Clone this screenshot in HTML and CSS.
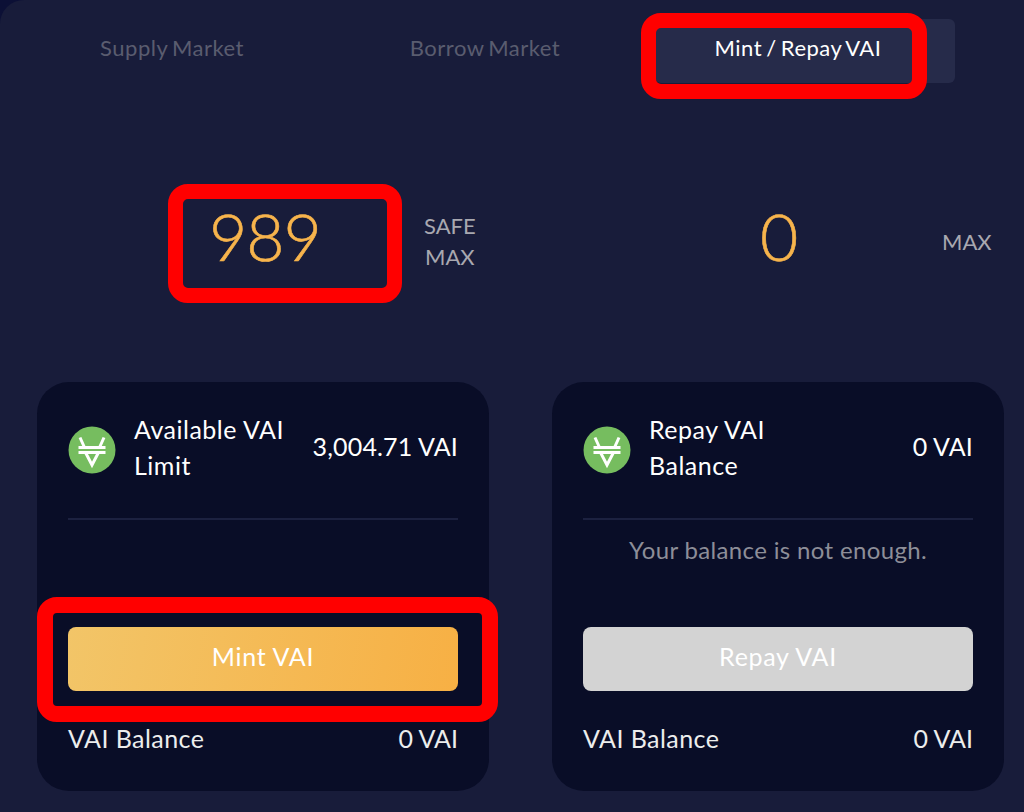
FILE: index.html
```html
<!DOCTYPE html>
<html lang="en">
<head>
<meta charset="utf-8">
<title>Mint / Repay VAI</title>
<link rel="stylesheet" href="styles.css">
</head>
<body>
<main class="panel">
  <nav class="tabs">
    <div class="tab">Supply Market</div>
    <div class="tab">Borrow Market</div>
    <div class="tab tab-active">Mint / Repay VAI</div>
  </nav>
  <section class="inputs">
    <div class="input-col">
      <span class="amount amount-left">989</span>
      <span class="safe">SAFE<br>MAX</span>
    </div>
    <div class="input-col">
      <span class="amount amount-right">0</span>
      <span class="max">MAX</span>
    </div>
  </section>
  <section class="cards">
    <article class="card">
      <div class="card-head">
        <svg class="coin" viewBox="0 0 48 48" aria-hidden="true">
          <circle cx="24" cy="24" r="23.5" fill="#76bd5f"/>
          <g fill="none" stroke="#fff" stroke-width="3">
            <path d="M12 11.500 16.500 21.500M36 11.500 31.500 21.500M10.500 21.500H37.500M10.500 26.500H37.500M17.500 26.500 24 39 30.500 26.500"/>
          </g>
        </svg>
        <div class="head-label">Available VAI Limit</div>
        <div class="head-value">3,004.71 VAI</div>
      </div>
      <div class="note"></div>
      <button class="action action-mint" type="button">Mint VAI</button>
      <div class="balance"><span>VAI Balance</span><span class="balance-value">0 VAI</span></div>
    </article>
    <article class="card">
      <div class="card-head">
        <svg class="coin" viewBox="0 0 48 48" aria-hidden="true">
          <circle cx="24" cy="24" r="23.5" fill="#76bd5f"/>
          <g fill="none" stroke="#fff" stroke-width="3">
            <path d="M12 11.500 16.500 21.500M36 11.500 31.500 21.500M10.500 21.500H37.500M10.500 26.500H37.500M17.500 26.500 24 39 30.500 26.500"/>
          </g>
        </svg>
        <div class="head-label head-label-short">Repay VAI Balance</div>
        <div class="head-value">0 VAI</div>
      </div>
      <div class="note">Your balance is not enough.</div>
      <button class="action action-repay" type="button">Repay VAI</button>
      <div class="balance"><span>VAI Balance</span><span class="balance-value">0 VAI</span></div>
    </article>
  </section>
  <div class="mark mark-tab"></div>
  <div class="mark mark-amount"></div>
  <div class="mark mark-button"></div>
</main>
</body>
</html>
```
FILE: styles.css
```css
* { box-sizing: border-box; }
html, body { margin: 0; height: 100%; }
body {
  background: #0c1036;
  font-family: "Lato", "Liberation Sans", sans-serif;
  overflow: hidden;
}
.panel {
  position: relative;
  width: 1024px;
  height: 812px;
  background: #181c3a;
  border-top-left-radius: 24px;
  overflow: hidden;
}
.tabs {
  display: flex;
  gap: 13px;
  padding: 19px 0 0 29px;
}
.tab {
  width: 300px;
  height: 64px;
  padding: 13px 14px 0 0;
  border-radius: 6px;
  text-align: center;
  font-size: 22px;
  line-height: 32px;
  letter-spacing: 0.5px;
  word-spacing: -2px;
  color: #5a5c6f;
}
.tab-active {
  background: #262b4a;
  color: #fff;
}
.inputs {
  display: flex;
  height: 299px;
  padding-left: 37px;
  gap: 63px;
}
.input-col {
  position: relative;
  width: 452px;
  display: flex;
  align-items: center;
  padding-top: 13px;
}
.amount {
  font-size: 66px;
  line-height: 80px;
  font-weight: 300;
  letter-spacing: -1px;
  -webkit-text-stroke: 0.6px #f7b44c;
  color: #f7b44c;
  margin-top: -6px;
}
.amount-left { margin-left: 172px; width: 215px; }
.amount-right { margin-left: 208px; width: 182px; }
.safe {
  font-size: 22px;
  line-height: 31px;
  color: #a8a8b0;
  text-align: center;
  margin-top: 4px;
}
.max {
  font-size: 22px;
  line-height: 31px;
  color: #a8a8b0;
  margin-top: 5px;
}
.cards {
  display: flex;
  gap: 63px;
  padding-left: 37px;
}
.card {
  width: 452px;
  height: 409px;
  padding: 29px 31px 0;
  background: #090d27;
  border-radius: 32px;
}
.card-head {
  display: flex;
  align-items: flex-start;
  height: 109px;
  border-bottom: 2px solid #1c2140;
  font-size: 25px;
  line-height: 36px;
  color: #fff;
}
.coin {
  width: 48px;
  height: 48px;
  margin-top: 15px;
  flex: none;
}
.head-label {
  width: 165px;
  margin-left: 18px;
  letter-spacing: 0.5px;
}
.head-label-short { width: 140px; }
.head-value {
  margin-left: auto;
  margin-top: 17px;
  letter-spacing: 0.15px;
}
.note {
  height: 107px;
  padding-top: 14px;
  text-align: center;
  font-size: 24px;
  line-height: 32px;
  letter-spacing: 0.35px;
  color: #8d8e98;
}
.action {
  display: block;
  width: 100%;
  height: 64px;
  border: 0;
  border-radius: 8px;
  font-family: inherit;
  font-size: 25px;
  letter-spacing: 0.7px;
  color: #fff;
  padding: 0 0 6px;
}
.action-mint { background: linear-gradient(100deg, #f2c568, #f7b044); }
.action-repay { background: #d3d3d3; }
.balance {
  display: flex;
  justify-content: space-between;
  margin-top: 29px;
  font-size: 25px;
  line-height: 36px;
  letter-spacing: 0.45px;
  color: #eceded;
}
.balance-value { letter-spacing: 0; }
.mark {
  position: absolute;
  border: 15px solid #ff0000;
  border-radius: 20px;
}
.mark-tab { left: 641px; top: 13px; width: 286px; height: 86px; }
.mark-amount { left: 168px; top: 184px; width: 234px; height: 119px; }
.mark-button { left: 37px; top: 597px; width: 461px; height: 125px; border-width: 16px; }
```
